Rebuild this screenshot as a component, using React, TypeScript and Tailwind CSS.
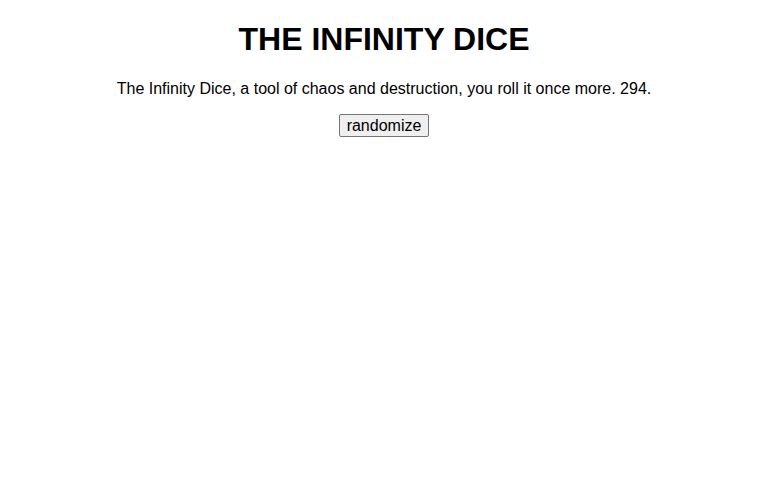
export default function App() {
  return (
    <div className="min-h-[480px] bg-white text-center text-black font-['Liberation_Sans',Arial,sans-serif]">
      <h1 className="pt-[21px] text-[32px] leading-[37px] font-bold">THE INFINITY DICE</h1>
      <p className="mt-[22px] text-[16px] leading-[18px]">
        The Infinity Dice, a tool of chaos and destruction, you roll it once more. 294.
      </p>
      <div className="mt-[16px]">
        <button className="px-[7px] py-[1px] text-[16px] leading-[19px] bg-[#efefef] border border-[#767676] rounded-[2px] text-black">
          randomize
        </button>
      </div>
    </div>
  );
}
